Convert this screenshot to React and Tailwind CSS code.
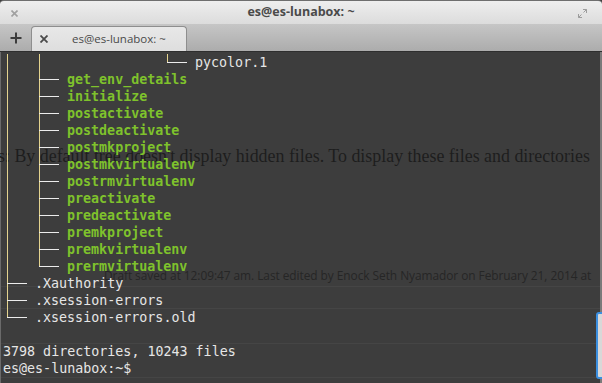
import React from "react";

const mono = { fontFamily: '"DejaVu Sans Mono", "Liberation Mono", monospace' };

const lineColor = "bg-[#e4d38e]";

function Cell({ kind }) {
  // one tree column = 4 chars = 32px
  return (
    <span className="relative inline-block w-[32px] h-[17px] align-top">
      {(kind === "pipe" || kind === "tee") && (
        <span className={`absolute left-[4px] top-0 h-[17px] w-px ${lineColor}`} />
      )}
      {kind === "end" && (
        <span className={`absolute left-[4px] top-0 h-[9px] w-px ${lineColor}`} />
      )}
      {(kind === "tee" || kind === "end") && (
        <span className="absolute left-[4px] top-[8px] h-px w-[20px] bg-[#ececec]" />
      )}
    </span>
  );
}

function Row({ cells = [], text, green }) {
  return (
    <div className="flex h-[17px] leading-[17px] whitespace-pre">
      {cells.map((c, i) => (
        <Cell key={i} kind={c} />
      ))}
      {text && (
        <span className={green ? "font-bold text-[#7fc22c]" : "text-[#e6e6e6]"}>{text}</span>
      )}
    </div>
  );
}

const hooks = [
  "get_env_details",
  "initialize",
  "postactivate",
  "postdeactivate",
  "postmkproject",
  "postmkvirtualenv",
  "postrmvirtualenv",
  "preactivate",
  "predeactivate",
  "premkproject",
  "premkvirtualenv",
];

export default function App() {
  return (
    <div className="w-[602px] h-[383px] overflow-hidden flex flex-col bg-[#3d3d3d]" style={{ fontFamily: '"Open Sans", "Noto Sans", sans-serif' }}>
      {/* title bar */}
      <div className="h-[24px] shrink-0 flex items-center rounded-t-[4px] border-t border-[#6e6e6e] bg-gradient-to-b from-[#eeeeee] to-[#dcdcdc] relative">
        <svg className="absolute left-[11px] top-[9px]" width="7" height="7" viewBox="0 0 7 7">
          <path d="M0.5 0.5 L6.5 6.5 M6.5 0.5 L0.5 6.5" stroke="#a0a0a0" strokeWidth="1.6" />
        </svg>
        <div className="flex-1 text-center text-[12.5px] font-bold text-[#4a4a4a] leading-none">es@es-lunabox: ~</div>
        <svg className="absolute left-[578px] top-[8px]" width="9" height="9" viewBox="0 0 9 9">
          <path d="M5 0.5 H8.5 V4 M8.5 0.5 L5.5 3.5 M4 8.5 H0.5 V5 M0.5 8.5 L3.5 5.5" stroke="#9c9c9c" strokeWidth="1" fill="none" />
        </svg>
      </div>

      {/* tab bar */}
      <div className="h-[28px] shrink-0 flex items-end bg-gradient-to-b from-[#c6c6c6] to-[#acacac] border-b border-[#2e2e2e]">
        <div className="w-[31px] h-full flex items-center justify-center">
          <svg width="12" height="12" viewBox="0 0 12 12">
            <path d="M6 0.5 V11.5 M0.5 6 H11.5" stroke="#3c3c3c" strokeWidth="2" />
          </svg>
        </div>
        <div className="w-[156px] h-[25px] rounded-t-[4px] border border-b-0 border-[#8e8e8e] bg-gradient-to-b from-[#e8e8e8] to-[#dedede] flex items-center">
          <svg className="ml-[8px]" width="8" height="8" viewBox="0 0 8 8">
            <path d="M0.5 0.5 L7.5 7.5 M7.5 0.5 L0.5 7.5" stroke="#4a4a4a" strokeWidth="1.8" />
          </svg>
          <span className="ml-[24px] text-[11.5px] text-[#4a4a4a] leading-none">es@es-lunabox: ~</span>
        </div>
      </div>

      {/* terminal */}
      <div className="relative flex-1 border-l border-r-2 border-[#6a6a6a] border-r-[#7a7a7a]">
        {/* page behind, seen through the translucent terminal */}
        <div className="absolute inset-0 z-0">
          <div className="absolute left-0 right-0 top-[234px] h-px bg-[#454545]" />
          <div className="absolute left-0 right-0 top-[256px] h-px bg-[#454545]" />
          <div className="absolute left-0 right-0 top-[291px] h-px bg-[#454545]" />
          <div className="absolute left-0 right-0 top-[325px] h-px bg-[#454545]" />
          <div
            className="absolute left-[-3px] top-[96px] whitespace-nowrap text-[17.9px] leading-none text-[#1d1d1d]"
            style={{ fontFamily: '"Liberation Serif", serif' }}
          >
            s: By default tree doesn't display hidden files. To display these files and directories
          </div>
          <div className="absolute left-[103px] top-[218px] whitespace-nowrap text-[11.9px] tracking-[-0.05px] leading-none text-[#262626]">
            Draft saved at 12:09:47 am. Last edited by Enock Seth Nyamador on February 21, 2014 at
          </div>
          <div className="absolute left-[595px] top-[260px] w-[12px] h-[67px] rounded-[3px] border-2 border-[#3b8fe0] bg-[#d8d8d8]" />
        </div>

        <div className="relative z-10 pl-[2px] pt-[2px] text-[13.33px]" style={mono}>
          <Row cells={["pipe", "pipe", "blank", "blank", "blank", "end"]} text="pycolor.1" />
          {hooks.map((h) => (
            <Row key={h} cells={["pipe", "tee"]} text={h} green />
          ))}
          <Row cells={["pipe", "end"]} text="prermvirtualenv" green />
          <Row cells={["tee"]} text=".Xauthority" />
          <Row cells={["tee"]} text=".xsession-errors" />
          <Row cells={["end"]} text=".xsession-errors.old" />
          <Row />
          <Row text="3798 directories, 10243 files" />
          <Row text="es@es-lunabox:~$" />
        </div>
      </div>
    </div>
  );
}
